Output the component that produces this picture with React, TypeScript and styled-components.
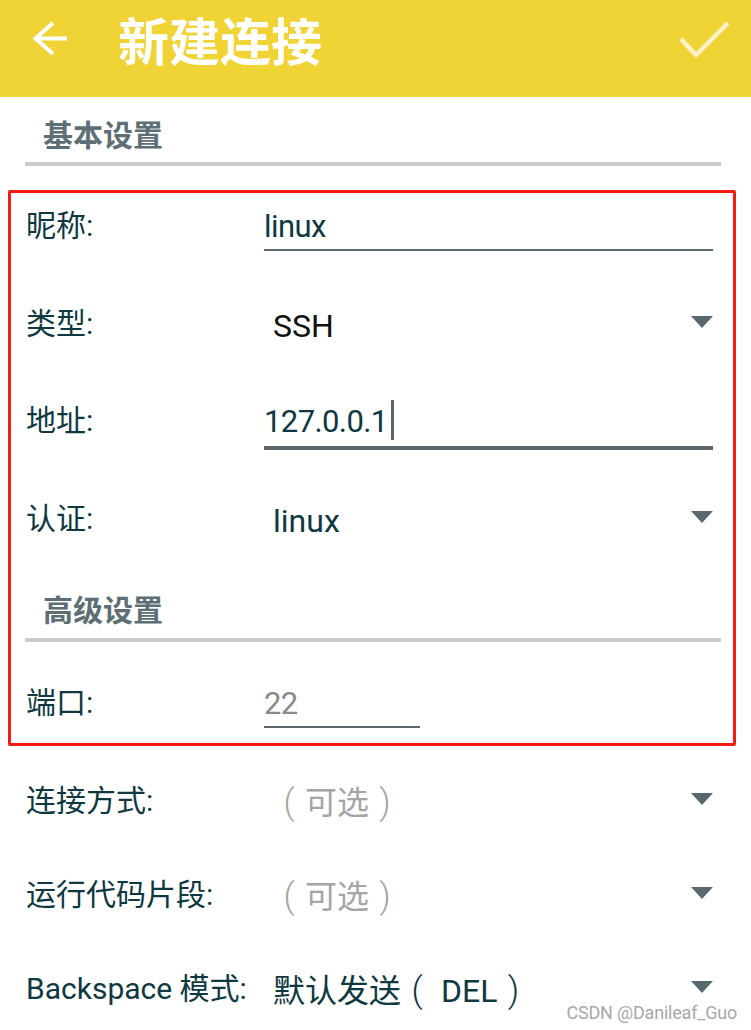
import React from "react";
import styled, { createGlobalStyle } from "styled-components";

const GlobalStyle = createGlobalStyle`
  html, body {
    margin: 0;
    padding: 0;
    background: #ffffff;
  }
  body {
    width: 751px;
    height: 1030px;
    overflow: hidden;
    font-family: Roboto, "Noto Sans CJK SC", sans-serif;
  }
`;

const Page = styled.div`
  position: relative;
  width: 751px;
  height: 1030px;
  overflow: hidden;
  background: #ffffff;
`;

const Toolbar = styled.header`
  height: 97px;
  box-sizing: border-box;
  padding-bottom: 19px;
  background: #f0d334;
  display: flex;
  align-items: center;
`;

const BackButton = styled.svg`
  margin-left: 30px;
  flex-shrink: 0;
`;

const Title = styled.h1`
  margin: 0 0 0 48px;
  font-family: "Noto Sans CJK SC", sans-serif;
  font-weight: 700;
  font-size: 51px;
  line-height: 60px;
  color: #ffffff;
  white-space: nowrap;
`;

const DoneButton = styled.svg`
  margin-left: auto;
  margin-right: 17px;
  flex-shrink: 0;
`;

const Section = styled.div<{ $pt: number; $pb: number }>`
  padding: ${(p) => p.$pt}px 30px ${(p) => p.$pb}px 25px;
`;

const SectionTitle = styled.div`
  padding-left: 18px;
  font-family: "Noto Sans CJK SC", sans-serif;
  font-size: 30px;
  line-height: 36px;
  font-weight: 700;
  color: #5d6f74;
`;

const Divider = styled.div<{ $gap: number }>`
  margin-top: ${(p) => p.$gap}px;
  height: 4px;
  background: #cccccc;
`;

const Highlight = styled.div`
  position: relative;
  &::after {
    content: "";
    position: absolute;
    top: 13px;
    bottom: 5px;
    left: 8px;
    right: 15px;
    border: 3px solid #f41c15;
    border-radius: 2px;
    pointer-events: none;
  }
`;

const Row = styled.div<{ $h: number }>`
  display: flex;
  align-items: center;
  height: ${(p) => p.$h}px;
  box-sizing: border-box;
  padding: 0 38px 0 26px;
`;

const Label = styled.span`
  width: 238px;
  flex-shrink: 0;
  font-size: 30px;
  line-height: 36px;
  color: #0f3841;
  white-space: nowrap;
`;

const TextField = styled.div<{ $w?: number; $focused?: boolean; $muted?: boolean }>`
  ${(p) => (p.$w ? `width: ${p.$w}px;` : "flex: 1;")}
  padding-top: ${(p) => (p.$focused ? 12 : 8)}px;
  padding-bottom: ${(p) => (p.$focused ? 7 : 5)}px;
  border-bottom: ${(p) => (p.$focused ? 4 : 2)}px solid #57696e;
  font-size: 31px;
  line-height: 34px;
  letter-spacing: -0.6px;
  color: ${(p) => (p.$muted ? "#8a8a8a" : "#0f3841")};
  white-space: nowrap;
`;

const Caret = styled.span`
  display: inline-block;
  width: 3px;
  height: 40px;
  margin: -8px 0 -2px 3px;
  vertical-align: -6px;
  background: #57696e;
`;

const Select = styled.div`
  flex: 1;
  display: flex;
  align-items: center;
  justify-content: space-between;
  padding-left: 9px;
`;

const SelectValue = styled.span<{ $tone: "dark" | "black" | "hint" }>`
  padding-top: 3px;
  font-size: 32px;
  line-height: 36px;
  white-space: nowrap;
  color: ${(p) =>
    p.$tone === "black" ? "#111111" : p.$tone === "hint" ? "#a5a5a5" : "#0f3841"};
`;

const Paren = styled.span`
  display: inline-block;
  width: 32px;
  text-align: center;
  font-size: 35px;
  font-weight: 300;
`;

const DropArrow = styled.span`
  width: 0;
  height: 0;
  margin-bottom: 4px;
  border-left: 11px solid transparent;
  border-right: 11px solid transparent;
  border-top: 12px solid #57696e;
`;

const Watermark = styled.div`
  position: absolute;
  right: 14px;
  bottom: 7px;
  font-family: Roboto, sans-serif;
  font-size: 18px;
  line-height: 20px;
  color: #a8a8a8;
  letter-spacing: -0.2px;
`;

type Tone = "dark" | "black" | "hint";

const SelectRow = ({
  label,
  children,
  tone,
  h,
}: {
  label: string;
  children: React.ReactNode;
  tone: Tone;
  h: number;
}) => (
  <Row $h={h}>
    <Label>{label}</Label>
    <Select>
      <SelectValue $tone={tone}>{children}</SelectValue>
      <DropArrow />
    </Select>
  </Row>
);

const Optional = () => (
  <>
    <Paren>(</Paren>可选<Paren>)</Paren>
  </>
);

export default function App() {
  return (
    <Page>
      <GlobalStyle />
      <Toolbar>
        <BackButton width="40" height="40" viewBox="0 0 40 40" fill="none">
          <path
            d="M23 4 L5.5 19.5 L23 35 M5.5 19.5 H37"
            stroke="#ffffff"
            strokeWidth="4"
            strokeLinejoin="miter"
          />
        </BackButton>
        <Title>新建连接</Title>
        <DoneButton width="58" height="48" viewBox="0 0 58 48" fill="none">
          <path
            d="M5 24 L20 40 L52 8"
            stroke="rgba(255,255,255,0.72)"
            strokeWidth="4.5"
          />
        </DoneButton>
      </Toolbar>

      <Section $pt={18} $pb={11}>
        <SectionTitle>基本设置</SectionTitle>
        <Divider $gap={11} />
      </Section>

      <Highlight>
        <Row $h={98}>
          <Label>昵称:</Label>
          <TextField>linux</TextField>
        </Row>
        <SelectRow h={98} label="类型:" tone="black">
          SSH
        </SelectRow>
        <Row $h={96}>
          <Label>地址:</Label>
          <TextField $focused>
            127.0.0.1
            <Caret />
          </TextField>
        </Row>
        <SelectRow h={100} label="认证:" tone="dark">
          linux
        </SelectRow>

        <Section $pt={21} $pb={13}>
          <SectionTitle>高级设置</SectionTitle>
          <Divider $gap={12} />
        </Section>

        <Row $h={96}>
          <Label>端口:</Label>
          <TextField $w={156} $muted>
            22
          </TextField>
        </Row>
      </Highlight>

      <SelectRow h={100} label="连接方式:" tone="hint">
        <Optional />
      </SelectRow>
      <SelectRow h={88} label="运行代码片段:" tone="hint">
        <Optional />
      </SelectRow>
      <SelectRow h={100} label="Backspace 模式:" tone="dark">
        默认发送<Paren>(</Paren> DEL<Paren>)</Paren>
      </SelectRow>

      <Watermark>CSDN @Danileaf_Guo</Watermark>
    </Page>
  );
}
